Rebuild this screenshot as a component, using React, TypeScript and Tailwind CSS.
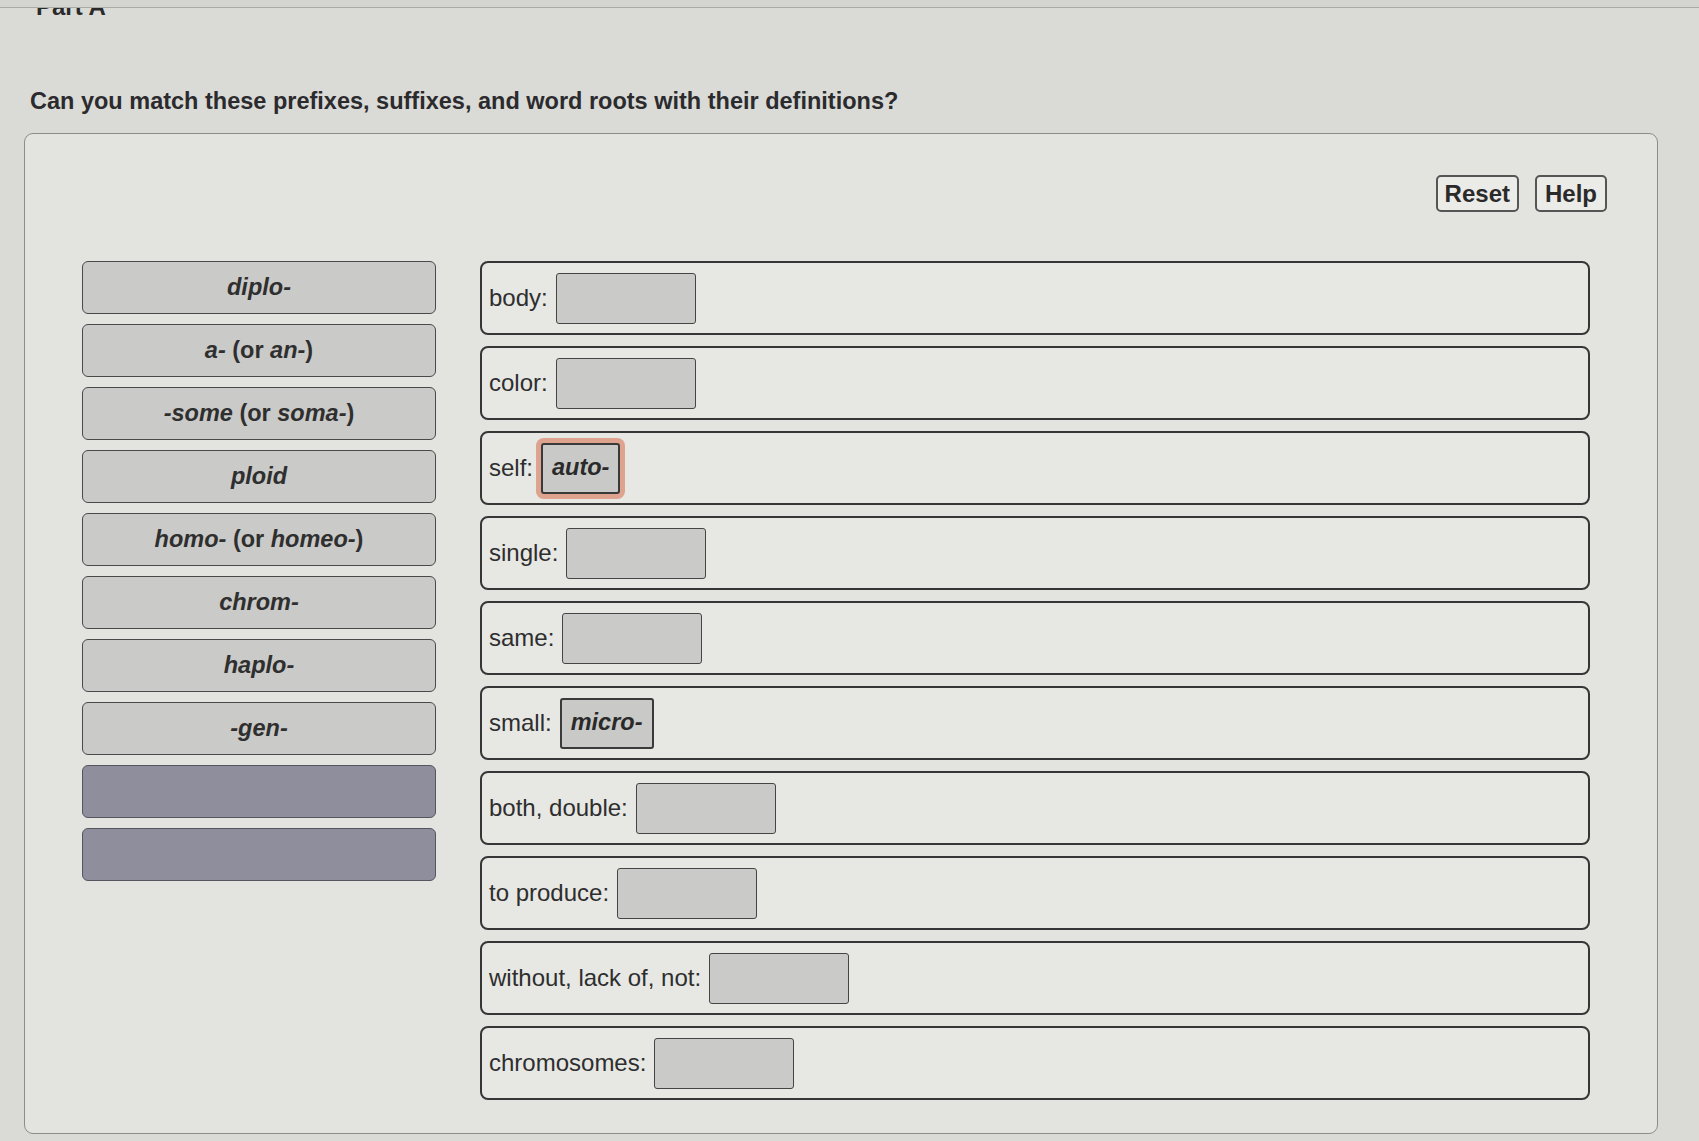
type Part = { t: string; i: boolean };

const tiles: (Part[] | null)[] = [
  [{ t: 'diplo-', i: true }],
  [
    { t: 'a-', i: true },
    { t: ' (or ', i: false },
    { t: 'an-', i: true },
    { t: ')', i: false },
  ],
  [
    { t: '-some', i: true },
    { t: ' (or ', i: false },
    { t: 'soma-', i: true },
    { t: ')', i: false },
  ],
  [{ t: 'ploid', i: true }],
  [
    { t: 'homo-', i: true },
    { t: ' (or ', i: false },
    { t: 'homeo-', i: true },
    { t: ')', i: false },
  ],
  [{ t: 'chrom-', i: true }],
  [{ t: 'haplo-', i: true }],
  [{ t: '-gen-', i: true }],
  null,
  null,
];

const targets: { label: string; value?: string; focused?: boolean }[] = [
  { label: 'body:' },
  { label: 'color:' },
  { label: 'self:', value: 'auto-', focused: true },
  { label: 'single:' },
  { label: 'same:' },
  { label: 'small:', value: 'micro-' },
  { label: 'both, double:' },
  { label: 'to produce:' },
  { label: 'without, lack of, not:' },
  { label: 'chromosomes:' },
];

function Tile({ parts }: { parts: Part[] | null }) {
  if (!parts) {
    return (
      <div className="h-[53px] rounded-[6px] border-[1.5px] border-[#55555f] bg-[#8f8e9d]" />
    );
  }
  return (
    <div className="h-[53px] rounded-[6px] border-[1.5px] border-[#4a4a4a] bg-[#cacac8] flex items-center justify-center text-[23.5px] font-bold text-[#2f2f2f] whitespace-pre">
      {parts.map((p, k) => (
        <span key={k} className={p.i ? 'italic' : ''}>
          {p.t}
        </span>
      ))}
    </div>
  );
}

function Target({ label, value, focused }: { label: string; value?: string; focused?: boolean }) {
  return (
    <div className="h-[74px] rounded-[8px] border-2 border-[#363636] bg-[#e7e7e4] flex items-center gap-[8px] pl-[7px]">
      <span className="text-[24px] text-[#2e2e2e]">{label}</span>
      {value ? (
        <div
          className={`h-[51px] px-[9px] flex items-center rounded-[3px] border-2 border-[#3a3a3a] bg-[#c9c9c8] text-[23.5px] font-bold italic text-[#2a2a2a] ${
            focused ? 'shadow-[0_0_0_5px_#dea38e]' : ''
          }`}
        >
          {value}
        </div>
      ) : (
        <div className="h-[51px] w-[140px] rounded-[3px] border-[1.5px] border-[#454545] bg-[#cacac9]" />
      )}
    </div>
  );
}

export default function App() {
  return (
    <div className="h-[1141px] overflow-hidden bg-[#dadad7] font-['Liberation_Sans',Arial,sans-serif]">
      <div className="h-[8px] bg-[#d4d4d1] border-b border-[#aaaaa7]" />
      <div className="h-[8px] overflow-hidden">
        <div className="-mt-[15px] pl-[36px] text-[24px] leading-[28px] font-bold text-[#2a2a2a]">Part A</div>
      </div>

      <h1 className="mt-[71px] pl-[30px] text-[23.5px] leading-[28px] font-bold text-[#2b2b2e]">
        Can you match these prefixes, suffixes, and word roots with their definitions?
      </h1>

      <div className="mt-[18px] ml-[24px] w-[1634px] rounded-[9px] border border-[#8c8c8a] bg-[#e3e3e0] pt-[41px] pb-[33px]">
        <div className="flex justify-end gap-[16px] pr-[50px]">
          <button className="h-[37px] px-[7px] rounded-[5px] border-2 border-[#555] bg-[#ebebe8] text-[24px] font-bold text-[#2a2a2a] leading-none">
            Reset
          </button>
          <button className="h-[37px] px-[8px] rounded-[5px] border-2 border-[#555] bg-[#ebebe8] text-[24px] font-bold text-[#2a2a2a] leading-none">
            Help
          </button>
        </div>

        <div className="mt-[49px] flex gap-[44px] pl-[57px]">
          <div className="w-[354px] flex flex-col gap-[10px]">
            {tiles.map((t, k) => (
              <Tile key={k} parts={t} />
            ))}
          </div>
          <div className="w-[1110px] flex flex-col gap-[11px]">
            {targets.map((r) => (
              <Target key={r.label} {...r} />
            ))}
          </div>
        </div>
      </div>
    </div>
  );
}
